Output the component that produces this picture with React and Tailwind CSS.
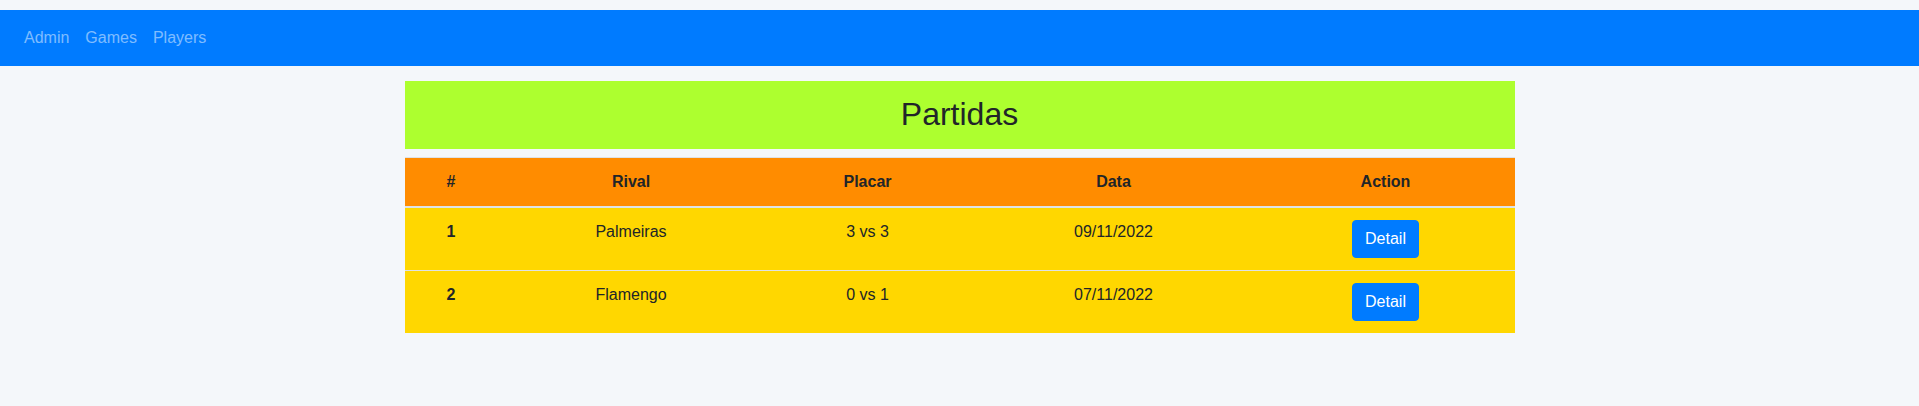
import React from "react";

const rows = [
  { id: 1, rival: "Palmeiras", placar: "3 vs 3", data: "09/11/2022" },
  { id: 2, rival: "Flamengo", placar: "0 vs 1", data: "07/11/2022" },
];

export default function App() {
  return (
    <div
      className="min-h-screen bg-[#f4f7fa] pt-[10px] text-[#212529]"
      style={{ fontFamily: '"Liberation Sans", Arial, sans-serif' }}
    >
      <nav className="h-[56px] bg-[#007bff] px-4 py-2 flex items-center">
        <ul className="flex">
          {["Admin", "Games", "Players"].map((l) => (
            <li key={l}>
              <a className="block px-2 py-2 text-[16px] leading-6 text-white/50">{l}</a>
            </li>
          ))}
        </ul>
      </nav>

      <div className="w-[1110px] mx-auto mt-[15px]">
        <div className="bg-[#adff2f] h-[68px] pt-[14px] text-center">
          <h2 className="text-[32px] leading-[38px] font-normal">Partidas</h2>
        </div>

        <table className="w-full table-fixed border-collapse mt-[8px] text-[16px] leading-6">
          <colgroup>
            <col className="w-[93px]" />
            <col className="w-[267px]" />
            <col className="w-[206px]" />
            <col className="w-[286px]" />
            <col className="w-[258px]" />
          </colgroup>
          <thead>
            <tr className="bg-[#ff8c00]">
              {["#", "Rival", "Placar", "Data", "Action"].map((h) => (
                <th
                  key={h}
                  className="p-3 font-bold text-center border-t border-t-[#dee2e6] border-b-2 border-b-[#dee2e6]"
                >
                  {h}
                </th>
              ))}
            </tr>
          </thead>
          <tbody>
            {rows.map((r, i) => (
              <tr key={r.id} className="bg-[#ffd700]">
                <th className={`p-3 font-bold text-center align-top ${i > 0 ? "border-t border-t-[#dee2e6]" : ""}`}>
                  {r.id}
                </th>
                <td className={`p-3 text-center align-top ${i > 0 ? "border-t border-t-[#dee2e6]" : ""}`}>{r.rival}</td>
                <td className={`p-3 text-center align-top ${i > 0 ? "border-t border-t-[#dee2e6]" : ""}`}>{r.placar}</td>
                <td className={`p-3 text-center align-top ${i > 0 ? "border-t border-t-[#dee2e6]" : ""}`}>{r.data}</td>
                <td className={`p-3 text-center align-top ${i > 0 ? "border-t border-t-[#dee2e6]" : ""}`}>
                  <button className="bg-[#007bff] border border-[#007bff] text-white rounded-[4px] px-3 py-[6px] text-[16px] leading-6">
                    Detail
                  </button>
                </td>
              </tr>
            ))}
          </tbody>
        </table>
      </div>
    </div>
  );
}
